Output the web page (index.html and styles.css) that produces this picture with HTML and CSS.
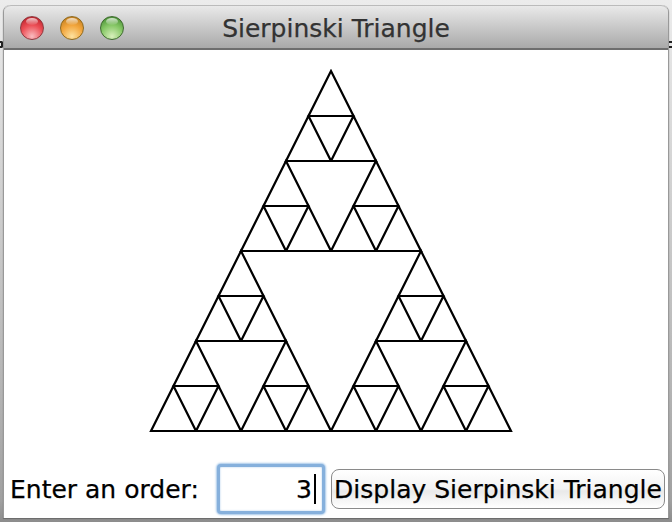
FILE: index.html
```html
<!DOCTYPE html>
<html lang="en">
<head>
<meta charset="utf-8">
<title>Sierpinski Triangle</title>
<link rel="stylesheet" href="styles.css">
</head>
<body>
<span class="scrap scrap-left"></span>
<span class="scrap scrap-right"></span>
<div class="window">
  <header class="titlebar">
    <div class="lights">
      <span class="light red"></span>
      <span class="light orange"></span>
      <span class="light green"></span>
    </div>
    <h1 class="title">Sierpinski Triangle</h1>
  </header>
  <main class="canvas">
    <svg class="fractal" width="364" height="364" viewBox="149 69 364 364" aria-label="Sierpinski triangle of order 3">
      <defs><path id="t" d="M0 0L22.5 45H-22.5Z"/></defs>
      <g class="tri">
        <use href="#t" x="331" y="71"/>
        <use href="#t" x="308.5" y="116"/><use href="#t" x="353.5" y="116"/>
        <use href="#t" x="286" y="161"/><use href="#t" x="376" y="161"/>
        <use href="#t" x="263.5" y="206"/><use href="#t" x="308.5" y="206"/><use href="#t" x="353.5" y="206"/><use href="#t" x="398.5" y="206"/>
        <use href="#t" x="241" y="251"/><use href="#t" x="421" y="251"/>
        <use href="#t" x="218.5" y="296"/><use href="#t" x="263.5" y="296"/><use href="#t" x="398.5" y="296"/><use href="#t" x="443.5" y="296"/>
        <use href="#t" x="196" y="341"/><use href="#t" x="286" y="341"/><use href="#t" x="376" y="341"/><use href="#t" x="466" y="341"/>
        <use href="#t" x="173.5" y="386"/><use href="#t" x="218.5" y="386"/><use href="#t" x="263.5" y="386"/><use href="#t" x="308.5" y="386"/><use href="#t" x="353.5" y="386"/><use href="#t" x="398.5" y="386"/><use href="#t" x="443.5" y="386"/><use href="#t" x="488.5" y="386"/>
      </g>
    </svg>
  </main>
  <footer class="controls">
    <span class="label">Enter an order:</span>
    <div class="field"><span class="value">3</span><span class="caret"></span></div>
    <button class="button" type="button">Display Sierpinski Triangle</button>
  </footer>
</div>
</body>
</html>
```
FILE: styles.css
```css
* { box-sizing: border-box; }
html, body { margin: 0; height: 100%; }
body {
  position: relative;
  width: 672px;
  height: 522px;
  overflow: hidden;
  background: linear-gradient(#ececec, #e4e4e4 10%, #b4b4b4 75%, #a0a0a0 96%, #8c8c8c);
  font-family: "DejaVu Sans", sans-serif;
  padding: 5px 3px 4px 3px;
  -webkit-text-stroke: 0.25px currentColor;
}
.scrap { position: absolute; top: 41px; height: 7px; }
.scrap-left { left: 0; width: 3px; border: 2px solid #222; border-left: 0; border-radius: 0 2px 2px 0; }
.scrap-right { left: 669px; width: 3px; border-top: 2px solid #222; border-bottom: 2px solid #222; }
.window {
  height: 513px;
  display: flex;
  flex-direction: column;
  background: #fff;
  border-left: 1px solid #999;
  border-right: 1px solid #999;
  border-radius: 7px 7px 0 0;
  box-shadow: 0 1px 1px #6a6a6a;
}
.titlebar {
  height: 45px;
  flex: none;
  position: relative;
  display: flex;
  align-items: center;
  justify-content: center;
  padding-top: 2px;
  background: linear-gradient(#e9e9e9, #a9a9a9);
  border-top: 1px solid #bbb;
  border-bottom: 2px solid #6e6e6e;
  border-radius: 7px 7px 0 0;
}
.lights {
  position: absolute;
  left: 16px;
  top: 10px;
  display: flex;
  gap: 16px;
}
.light {
  position: relative;
  width: 24px;
  height: 24px;
  border-radius: 50%;
}
.light::before {
  content: "";
  position: absolute;
  left: 5px;
  top: 1px;
  width: 12px;
  height: 7px;
  border-radius: 50%;
  background: linear-gradient(rgba(255, 255, 255, 0.75), rgba(255, 255, 255, 0.05));
}
.red { background: radial-gradient(circle at 50% 88%, #f9bcc0, #ec4f56 50%, #bd2029 90%); border: 1px solid #8e3a40; }
.orange { background: radial-gradient(circle at 50% 88%, #fde2a0, #f2a53c 50%, #c27e1e 90%); border: 1px solid #8e6a20; }
.green { background: radial-gradient(circle at 50% 88%, #d8f0bc, #86c766 50%, #488f34 90%); border: 1px solid #3f6a30; }
.title {
  margin: 0;
  font-size: 25px;
  font-weight: 400;
  color: #333;
  line-height: 1;
}
.canvas {
  flex: 1;
  min-height: 0;
  padding: 19px 0 0 145px;
}
.fractal { display: block; }
.tri { fill: none; stroke: #000; stroke-width: 2.2; }
.controls {
  flex: none;
  height: 58px;
  display: flex;
  align-items: center;
  padding: 0 3px 0 6px;
}
.label {
  flex: none;
  width: 188px;
  font-size: 25px;
  color: #000;
  margin-right: 19px;
  white-space: nowrap;
}
.field {
  width: 108px;
  height: 50px;
  flex: none;
  display: flex;
  align-items: center;
  justify-content: flex-end;
  padding-right: 6px;
  font-size: 25px;
  background: #fff;
  border: 3px solid #86b0dc;
  border-radius: 4px;
  box-shadow: 0 0 2px 1px #a4c6e8, inset 0 0 2px #a4c6e8;
}
.caret { width: 2px; height: 30px; background: #000; margin-left: 2px; }
.button {
  margin-left: 6px;
  width: 334px;
  height: 40px;
  padding: 0;
  font: inherit;
  font-size: 25px;
  color: #000;
  white-space: nowrap;
  background: linear-gradient(#fff, #f3f3f3 50%, #e9e9e9 55%, #fff);
  border: 1px solid #8a8a8a;
  border-radius: 8px;
}
```
